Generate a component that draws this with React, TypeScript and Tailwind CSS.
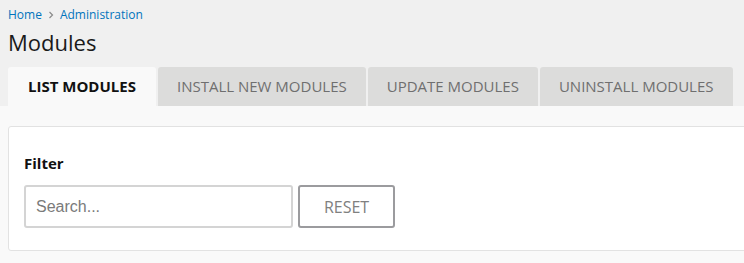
import React from 'react';

const tabs = [
  { label: 'LIST MODULES', active: true },
  { label: 'INSTALL NEW MODULES', active: false },
  { label: 'UPDATE MODULES', active: false },
  { label: 'UNINSTALL MODULES', active: false },
];

export default function App() {
  return (
    <div className="min-h-[263px] w-[744px] overflow-hidden bg-[#f0f0f0] font-['Open_Sans',sans-serif]">
      <div className="px-2 pt-[6px]">
        <nav className="flex items-center gap-[5px] text-[12px] leading-[18px] text-[#0074bd]">
          <a href="#">Home</a>
          <svg width="8" height="8" viewBox="0 0 8 8" className="text-[#8a8a8a]">
            <path d="M2.5 1 L5.5 4 L2.5 7" fill="none" stroke="currentColor" strokeWidth="1.2" />
          </svg>
          <a href="#">Administration</a>
        </nav>
        <h1 className="mt-[3px] text-[22px] leading-[30px] text-[#1a1a1a]">Modules</h1>
        <div className="mt-[10px] flex gap-[2px] whitespace-nowrap">
          {tabs.map((tab) => (
            <div
              key={tab.label}
              className={
                tab.active
                  ? 'flex h-[39px] shrink-0 items-center rounded-t-[3px] bg-[#f9f9f9] px-5 text-[15px] font-bold text-[#111]'
                  : 'flex h-[39px] shrink-0 items-center rounded-t-[3px] bg-[#dcdcdb] px-[19px] text-[15px] text-[#6f6f6f]'
              }
            >
              {tab.label}
            </div>
          ))}
        </div>
      </div>
      <div className="bg-[#f9f9f9] pb-3 pl-2 pt-5">
        <div className="-mr-6 rounded-[3px] border border-[#e2e2e2] bg-white px-[15px] pb-[22px] pt-[26px]">
          <div className="text-[15px] font-bold leading-[20px] text-[#111]">Filter</div>
          <div className="mt-[12px] flex gap-[5px]">
            <input
              type="text"
              placeholder="Search..."
              className="h-[43px] w-[269px] rounded-[3px] border-2 border-[#d4d4d4] bg-white px-[10px] font-['Liberation_Sans',sans-serif] text-[16px] text-[#333] outline-none placeholder:text-[#7a7a7a]"
            />
            <button className="h-[43px] w-[97px] rounded-[3px] border-2 border-[#9b9b9e] bg-white text-[16px] text-[#808080]">
              RESET
            </button>
          </div>
        </div>
      </div>
    </div>
  );
}
